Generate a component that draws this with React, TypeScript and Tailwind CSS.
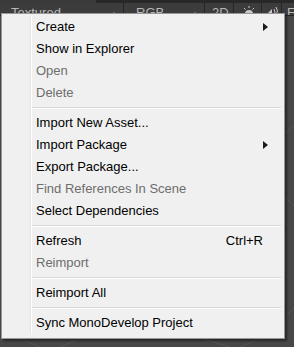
import { ReactNode } from "react";

type Item =
  | { kind: "item"; label: string; disabled?: boolean; sub?: boolean; shortcut?: string }
  | { kind: "sep" };

const items: Item[] = [
  { kind: "item", label: "Create", sub: true },
  { kind: "item", label: "Show in Explorer" },
  { kind: "item", label: "Open", disabled: true },
  { kind: "item", label: "Delete", disabled: true },
  { kind: "sep" },
  { kind: "item", label: "Import New Asset..." },
  { kind: "item", label: "Import Package", sub: true },
  { kind: "item", label: "Export Package..." },
  { kind: "item", label: "Find References In Scene", disabled: true },
  { kind: "item", label: "Select Dependencies" },
  { kind: "sep" },
  { kind: "item", label: "Refresh", shortcut: "Ctrl+R" },
  { kind: "item", label: "Reimport", disabled: true },
  { kind: "sep" },
  { kind: "item", label: "Reimport All" },
  { kind: "sep" },
  { kind: "item", label: "Sync MonoDevelop Project" },
];

const Cell = ({ children, className }: { children?: ReactNode; className: string }) => (
  <div className={`h-full shrink-0 border-r border-[#262626] flex items-start pt-[3px] text-[13px] leading-none text-[#b8b8b8] ${className}`}>
    {children}
  </div>
);

const DropArrow = () => (
  <svg width="6" height="4" viewBox="0 0 6 4" className="ml-auto mr-[6px] mt-[6px]">
    <path d="M0 4 L3 0 L6 4 Z" fill="#b8b8b8" />
  </svg>
);

const App = () => {
  return (
    <div
      className="relative w-[294px] h-[347px] overflow-hidden bg-[#474747]"
      style={{ fontFamily: '"Liberation Sans", Arial, sans-serif' }}
    >
      {/* editor background */}
      <div className="flex flex-col">
        <div className="h-[3px] bg-[#282828] flex">
          <div className="w-[96px] bg-[#3a3a3a]" />
        </div>
        <div className="h-[13px] bg-[#3c3c3c] flex overflow-hidden border-b border-[#262626]">
          <Cell className="w-[124px] pl-[11px]">
            <span>Textured</span>
            <DropArrow />
          </Cell>
          <Cell className="w-[81px] pl-[12px]">
            <span>RGB</span>
            <DropArrow />
          </Cell>
          <Cell className="w-[29px] pl-[7px]">2D</Cell>
          <Cell className="w-[28px] pl-[8px]">
            <svg width="14" height="8" viewBox="0 0 14 8">
              <circle cx="7" cy="8" r="4" fill="#c8c8c8" />
              <path d="M7 0 V2 M2 2 L3.5 3.5 M12 2 L10.5 3.5" stroke="#c8c8c8" />
            </svg>
          </Cell>
          <Cell className="w-[20px] pl-[4px]">
            <svg width="12" height="9" viewBox="0 0 12 9">
              <path d="M0 9 L6 3 V9 Z" fill="#c8c8c8" />
              <path d="M8 3 Q10 6 8 9 M10 1 Q13 5 10 9" stroke="#c8c8c8" fill="none" />
            </svg>
          </Cell>
          <Cell className="w-[20px] pl-[5px] border-r-0">E</Cell>
        </div>
        <div className="h-[331px] bg-[#474747]">
          <svg width="294" height="331" className="block">
            <path d="M282 120 L294 110 M284 180 L294 190 M286 300 L294 292 M10 318 L40 331 M60 331 L90 318 M200 322 L230 331 M240 331 L270 318" stroke="#555" strokeWidth="1" fill="none" />
          </svg>
        </div>
      </div>

      {/* context menu */}
      <div className="absolute left-[1px] top-[13px] w-[284px] bg-[#f0f0f0] border border-[#979797] shadow-[2px_2px_2px_rgba(0,0,0,0.45)] pt-[2px] pb-[4px] px-[2px]">
        <div className="relative">
          <div className="absolute left-[26px] top-0 bottom-0 w-px bg-[#e2e3e3]" />
          <div className="absolute left-[27px] top-0 bottom-0 w-px bg-white" />
          {items.map((it, i) =>
            it.kind === "sep" ? (
              <div key={i} className="h-[8px] flex flex-col justify-center pl-[28px] pr-[1px]">
                <div className="h-px bg-[#d7d7d7]" />
                <div className="h-px bg-white" />
              </div>
            ) : (
              <div
                key={i}
                className={`relative h-[22px] flex items-center pl-[32px] pr-[10px] text-[13px] ${
                  it.disabled ? "text-[#6d6d6d]" : "text-black"
                }`}
              >
                <span className="flex-1">{it.label}</span>
                {it.shortcut && <span className="mr-[9px]">{it.shortcut}</span>}
                {it.sub && (
                  <svg width="5" height="8" viewBox="0 0 5 8" className="mr-[4px]">
                    <path d="M0 0 L5 4 L0 8 Z" fill="#1a1a1a" />
                  </svg>
                )}
              </div>
            )
          )}
        </div>
      </div>
    </div>
  );
};

export default App;
